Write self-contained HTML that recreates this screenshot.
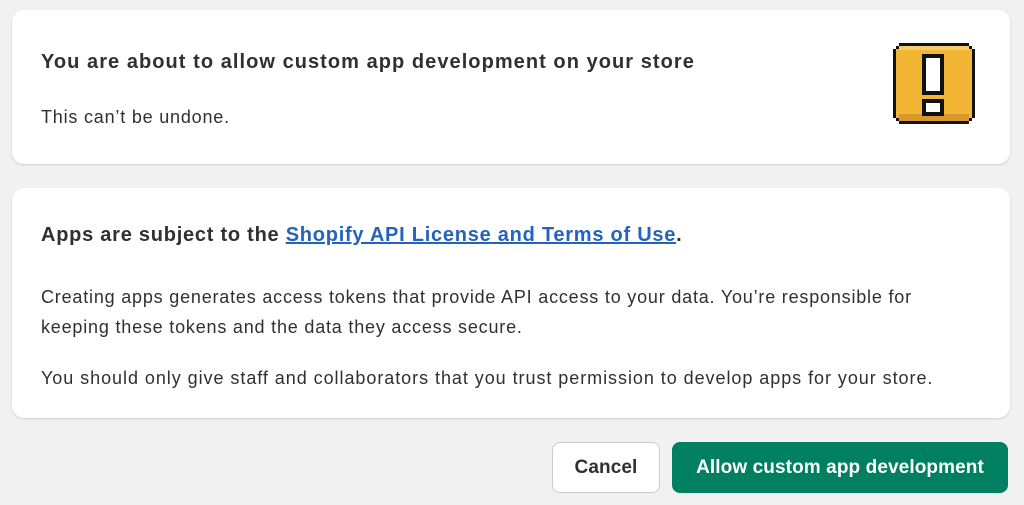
<!DOCTYPE html>
<html><head><style>
body{margin:0;width:1024px;height:505px;background:#f1f1f1;font-family:"Liberation Sans",sans-serif;color:#303030;position:relative;overflow:hidden}
.card{position:absolute;left:12px;width:998px;background:#fff;border-radius:12px;box-shadow:0 1px 2px rgba(0,0,0,.15)}
.t{position:absolute;left:29px;font-weight:bold;font-size:20px;letter-spacing:0.95px;color:#303030;white-space:nowrap}
.p{position:absolute;left:29px;font-size:18px;letter-spacing:0.8px;line-height:30px;color:#303030;white-space:nowrap}
a{color:#2463bc;text-decoration:underline}
.btn{position:absolute;top:442px;height:51px;border-radius:8px;font-weight:bold;font-size:19px;letter-spacing:0.1px;display:flex;align-items:center;justify-content:center;box-sizing:border-box}
</style></head><body>
<div class="card" style="top:10px;height:154px">
 <div class="t" style="top:41px;letter-spacing:1.05px">You are about to allow custom app development on your store</div>
 <div class="p" style="top:92px">This can’t be undone.</div>
 <svg style="position:absolute;left:881px;top:33px" width="82" height="81" viewBox="0 0 82 81">
  <rect x="6" y="0" width="70" height="81" fill="#111"/>
  <rect x="3" y="3" width="76" height="75" fill="#111"/>
  <rect x="0" y="6" width="82" height="69" fill="#111"/>
  <rect x="6" y="3" width="70" height="75" fill="#f2b634"/>
  <rect x="3" y="6" width="76" height="69" fill="#f2b634"/>
  <rect x="6" y="3" width="70" height="4" fill="#f8cc6a"/>
  <rect x="6" y="71" width="70" height="7" fill="#d9982a"/>
  <rect x="29" y="11" width="22" height="41" fill="#111"/>
  <rect x="33" y="15" width="14" height="33" fill="#fff"/>
  <rect x="29" y="56" width="22" height="17" fill="#111"/>
  <rect x="33" y="60" width="14" height="9" fill="#fff"/>
 </svg>
</div>
<div class="card" style="top:188px;height:230px">
 <div class="t" style="top:36px;letter-spacing:0.75px">Apps are subject to the <a>Shopify API License and Terms of Use</a>.</div>
 <div class="p" style="top:94px">Creating apps generates access tokens that provide API access to your data. You’re responsible for<br>keeping these tokens and the data they access secure.</div>
 <div class="p" style="top:175px;letter-spacing:0.95px">You should only give staff and collaborators that you trust permission to develop apps for your store.</div>
</div>
<div class="btn" style="left:552px;width:108px;background:#fff;border:1px solid #ccc;color:#303030">Cancel</div>
<div class="btn" style="left:672px;width:336px;background:#008060;color:#fff">Allow custom app development</div>
</body></html>
